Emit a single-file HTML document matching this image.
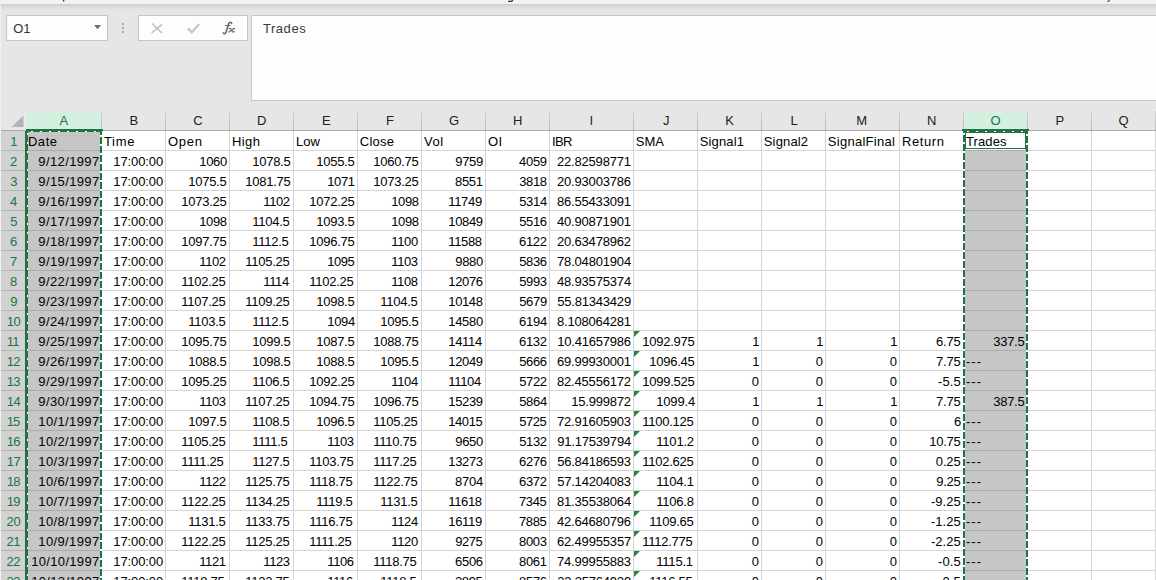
<!DOCTYPE html>
<html><head><meta charset="utf-8"><style>
*{margin:0;padding:0;box-sizing:border-box}
html,body{width:1156px;height:580px;overflow:hidden;background:#fff;font-family:"Liberation Sans",sans-serif}
.a{position:absolute}
.t{position:absolute;white-space:nowrap;font-size:13px;line-height:20px;height:20px;color:#000}
</style></head><body>

<div class="a" style="left:0;top:0;width:1156px;height:4px;background:#f3f2f1"></div>
<div class="a" style="left:0;top:4px;width:1156px;height:107px;background:linear-gradient(#cfcdcb 0px,#d8d8d7 2px,#e0e0e0 4px,#e6e6e6 7px)"></div>
<div class="a" style="left:0;top:4px;width:1px;height:576px;background:#f0f0f0"></div>
<div class="a" style="left:6px;top:15px;width:102px;height:26px;background:#fdfdfd;border:1px solid #c6c6c6"></div>
<div class="t" style="left:13.20px;top:19px;letter-spacing:0.034px;color:#333">O1</div>
<svg class="a" style="left:93px;top:24px" width="10" height="7"><path d="M1 1H8.1L4.55 5.2Z" fill="#707070"/></svg>
<div class="a" style="left:122px;top:23px;width:2px;height:2px;background:#a6a6a6"></div>
<div class="a" style="left:122px;top:27px;width:2px;height:2px;background:#a6a6a6"></div>
<div class="a" style="left:122px;top:31px;width:2px;height:2px;background:#a6a6a6"></div>
<div class="a" style="left:138px;top:15px;width:110px;height:26px;background:#fdfdfd;border:1px solid #c6c6c6"></div>
<svg class="a" style="left:150px;top:22px" width="14" height="13"><path d="M2 1.5L12 11M12 2.3L1.6 11" stroke="#c0c0c0" stroke-width="1.6" fill="none"/></svg>
<svg class="a" style="left:186px;top:22px" width="15" height="13"><path d="M1.8 6.4L5.8 10.4L13.2 2" stroke="#c8c8c8" stroke-width="2.3" fill="none"/></svg>
<svg class="a" style="left:218px;top:18px" width="22" height="18"><g transform="translate(-218,-18)" fill="none" stroke="#6b6b6b" stroke-linecap="round"><path d="M231.6 23.4C231.4 21.9 229.4 21.7 228.7 23.6L226.1 32.1C225.6 33.8 224 34.2 223.3 32.9" stroke-width="1.65"/><path d="M225.4 25.5H229.9" stroke-width="1.1"/><path d="M229.3 28.6Q230.6 27.9 231.3 29.6L232.3 31.4Q232.9 32.4 234.3 31.7" stroke-width="1.2"/><path d="M234.6 28.4Q233.4 28.4 231.6 30.2L228.8 32.1" stroke-width="1.2"/></g></svg>
<div class="a" style="left:251px;top:15px;width:920px;height:86px;background:#fdfdfd;border:1px solid #c6c6c6"></div>
<div class="t" style="left:262.88px;top:19px;letter-spacing:0.577px;color:#3a3a3a">Trades</div>
<div class="a" style="left:1px;top:111px;width:1155px;height:19px;background:#e6e6e6"></div>
<div class="a" style="left:1px;top:130px;width:1155px;height:1px;background:#ababab"></div>
<svg class="a" style="left:11px;top:115px" width="13" height="12"><path d="M12.5 0.5V12H0.5Z" fill="#b4b4b4"/></svg>
<div class="a" style="left:25px;top:111px;width:1px;height:19px;background:#f0f0f0"></div>
<div class="a" style="left:1px;top:131px;width:24px;height:449px;background:#d2d2d2"></div>
<div class="a" style="left:26px;top:111px;width:75px;height:18px;background:#d3f0e0"></div>
<div class="a" style="left:26px;top:131px;width:75px;height:449px;background:#c6c6c6"></div>
<div class="a" style="left:964px;top:111px;width:63px;height:18px;background:#d3f0e0"></div>
<div class="a" style="left:964px;top:131px;width:63px;height:449px;background:#c6c6c6"></div>
<div class="a" style="left:101px;top:111px;width:1px;height:19px;background:linear-gradient(#d4d4d4,#b8b8b8)"></div>
<div class="a" style="left:165px;top:111px;width:1px;height:19px;background:linear-gradient(#d4d4d4,#b8b8b8)"></div>
<div class="a" style="left:229px;top:111px;width:1px;height:19px;background:linear-gradient(#d4d4d4,#b8b8b8)"></div>
<div class="a" style="left:293px;top:111px;width:1px;height:19px;background:linear-gradient(#d4d4d4,#b8b8b8)"></div>
<div class="a" style="left:357px;top:111px;width:1px;height:19px;background:linear-gradient(#d4d4d4,#b8b8b8)"></div>
<div class="a" style="left:421px;top:111px;width:1px;height:19px;background:linear-gradient(#d4d4d4,#b8b8b8)"></div>
<div class="a" style="left:485px;top:111px;width:1px;height:19px;background:linear-gradient(#d4d4d4,#b8b8b8)"></div>
<div class="a" style="left:549px;top:111px;width:1px;height:19px;background:linear-gradient(#d4d4d4,#b8b8b8)"></div>
<div class="a" style="left:633px;top:111px;width:1px;height:19px;background:linear-gradient(#d4d4d4,#b8b8b8)"></div>
<div class="a" style="left:697px;top:111px;width:1px;height:19px;background:linear-gradient(#d4d4d4,#b8b8b8)"></div>
<div class="a" style="left:761px;top:111px;width:1px;height:19px;background:linear-gradient(#d4d4d4,#b8b8b8)"></div>
<div class="a" style="left:825px;top:111px;width:1px;height:19px;background:linear-gradient(#d4d4d4,#b8b8b8)"></div>
<div class="a" style="left:899px;top:111px;width:1px;height:19px;background:linear-gradient(#d4d4d4,#b8b8b8)"></div>
<div class="a" style="left:963px;top:111px;width:1px;height:19px;background:linear-gradient(#d4d4d4,#b8b8b8)"></div>
<div class="a" style="left:1027px;top:111px;width:1px;height:19px;background:linear-gradient(#d4d4d4,#b8b8b8)"></div>
<div class="a" style="left:1091px;top:111px;width:1px;height:19px;background:linear-gradient(#d4d4d4,#b8b8b8)"></div>
<div class="a" style="left:1155px;top:111px;width:1px;height:19px;background:linear-gradient(#d4d4d4,#b8b8b8)"></div>
<div class="a" style="left:26px;top:150px;width:1130px;height:1px;background:#d4d4d4"></div>
<div class="a" style="left:26px;top:150px;width:75px;height:1px;background:#ababab"></div>
<div class="a" style="left:964px;top:150px;width:63px;height:1px;background:#ababab"></div>
<div class="a" style="left:1px;top:150px;width:24px;height:1px;background:#b4b4b4"></div>
<div class="a" style="left:26px;top:170px;width:1130px;height:1px;background:#d4d4d4"></div>
<div class="a" style="left:26px;top:170px;width:75px;height:1px;background:#ababab"></div>
<div class="a" style="left:964px;top:170px;width:63px;height:1px;background:#ababab"></div>
<div class="a" style="left:1px;top:170px;width:24px;height:1px;background:#b4b4b4"></div>
<div class="a" style="left:26px;top:190px;width:1130px;height:1px;background:#d4d4d4"></div>
<div class="a" style="left:26px;top:190px;width:75px;height:1px;background:#ababab"></div>
<div class="a" style="left:964px;top:190px;width:63px;height:1px;background:#ababab"></div>
<div class="a" style="left:1px;top:190px;width:24px;height:1px;background:#b4b4b4"></div>
<div class="a" style="left:26px;top:210px;width:1130px;height:1px;background:#d4d4d4"></div>
<div class="a" style="left:26px;top:210px;width:75px;height:1px;background:#ababab"></div>
<div class="a" style="left:964px;top:210px;width:63px;height:1px;background:#ababab"></div>
<div class="a" style="left:1px;top:210px;width:24px;height:1px;background:#b4b4b4"></div>
<div class="a" style="left:26px;top:230px;width:1130px;height:1px;background:#d4d4d4"></div>
<div class="a" style="left:26px;top:230px;width:75px;height:1px;background:#ababab"></div>
<div class="a" style="left:964px;top:230px;width:63px;height:1px;background:#ababab"></div>
<div class="a" style="left:1px;top:230px;width:24px;height:1px;background:#b4b4b4"></div>
<div class="a" style="left:26px;top:250px;width:1130px;height:1px;background:#d4d4d4"></div>
<div class="a" style="left:26px;top:250px;width:75px;height:1px;background:#ababab"></div>
<div class="a" style="left:964px;top:250px;width:63px;height:1px;background:#ababab"></div>
<div class="a" style="left:1px;top:250px;width:24px;height:1px;background:#b4b4b4"></div>
<div class="a" style="left:26px;top:270px;width:1130px;height:1px;background:#d4d4d4"></div>
<div class="a" style="left:26px;top:270px;width:75px;height:1px;background:#ababab"></div>
<div class="a" style="left:964px;top:270px;width:63px;height:1px;background:#ababab"></div>
<div class="a" style="left:1px;top:270px;width:24px;height:1px;background:#b4b4b4"></div>
<div class="a" style="left:26px;top:290px;width:1130px;height:1px;background:#d4d4d4"></div>
<div class="a" style="left:26px;top:290px;width:75px;height:1px;background:#ababab"></div>
<div class="a" style="left:964px;top:290px;width:63px;height:1px;background:#ababab"></div>
<div class="a" style="left:1px;top:290px;width:24px;height:1px;background:#b4b4b4"></div>
<div class="a" style="left:26px;top:310px;width:1130px;height:1px;background:#d4d4d4"></div>
<div class="a" style="left:26px;top:310px;width:75px;height:1px;background:#ababab"></div>
<div class="a" style="left:964px;top:310px;width:63px;height:1px;background:#ababab"></div>
<div class="a" style="left:1px;top:310px;width:24px;height:1px;background:#b4b4b4"></div>
<div class="a" style="left:26px;top:330px;width:1130px;height:1px;background:#d4d4d4"></div>
<div class="a" style="left:26px;top:330px;width:75px;height:1px;background:#ababab"></div>
<div class="a" style="left:964px;top:330px;width:63px;height:1px;background:#ababab"></div>
<div class="a" style="left:1px;top:330px;width:24px;height:1px;background:#b4b4b4"></div>
<div class="a" style="left:26px;top:350px;width:1130px;height:1px;background:#d4d4d4"></div>
<div class="a" style="left:26px;top:350px;width:75px;height:1px;background:#ababab"></div>
<div class="a" style="left:964px;top:350px;width:63px;height:1px;background:#ababab"></div>
<div class="a" style="left:1px;top:350px;width:24px;height:1px;background:#b4b4b4"></div>
<div class="a" style="left:26px;top:370px;width:1130px;height:1px;background:#d4d4d4"></div>
<div class="a" style="left:26px;top:370px;width:75px;height:1px;background:#ababab"></div>
<div class="a" style="left:964px;top:370px;width:63px;height:1px;background:#ababab"></div>
<div class="a" style="left:1px;top:370px;width:24px;height:1px;background:#b4b4b4"></div>
<div class="a" style="left:26px;top:390px;width:1130px;height:1px;background:#d4d4d4"></div>
<div class="a" style="left:26px;top:390px;width:75px;height:1px;background:#ababab"></div>
<div class="a" style="left:964px;top:390px;width:63px;height:1px;background:#ababab"></div>
<div class="a" style="left:1px;top:390px;width:24px;height:1px;background:#b4b4b4"></div>
<div class="a" style="left:26px;top:410px;width:1130px;height:1px;background:#d4d4d4"></div>
<div class="a" style="left:26px;top:410px;width:75px;height:1px;background:#ababab"></div>
<div class="a" style="left:964px;top:410px;width:63px;height:1px;background:#ababab"></div>
<div class="a" style="left:1px;top:410px;width:24px;height:1px;background:#b4b4b4"></div>
<div class="a" style="left:26px;top:430px;width:1130px;height:1px;background:#d4d4d4"></div>
<div class="a" style="left:26px;top:430px;width:75px;height:1px;background:#ababab"></div>
<div class="a" style="left:964px;top:430px;width:63px;height:1px;background:#ababab"></div>
<div class="a" style="left:1px;top:430px;width:24px;height:1px;background:#b4b4b4"></div>
<div class="a" style="left:26px;top:450px;width:1130px;height:1px;background:#d4d4d4"></div>
<div class="a" style="left:26px;top:450px;width:75px;height:1px;background:#ababab"></div>
<div class="a" style="left:964px;top:450px;width:63px;height:1px;background:#ababab"></div>
<div class="a" style="left:1px;top:450px;width:24px;height:1px;background:#b4b4b4"></div>
<div class="a" style="left:26px;top:470px;width:1130px;height:1px;background:#d4d4d4"></div>
<div class="a" style="left:26px;top:470px;width:75px;height:1px;background:#ababab"></div>
<div class="a" style="left:964px;top:470px;width:63px;height:1px;background:#ababab"></div>
<div class="a" style="left:1px;top:470px;width:24px;height:1px;background:#b4b4b4"></div>
<div class="a" style="left:26px;top:490px;width:1130px;height:1px;background:#d4d4d4"></div>
<div class="a" style="left:26px;top:490px;width:75px;height:1px;background:#ababab"></div>
<div class="a" style="left:964px;top:490px;width:63px;height:1px;background:#ababab"></div>
<div class="a" style="left:1px;top:490px;width:24px;height:1px;background:#b4b4b4"></div>
<div class="a" style="left:26px;top:510px;width:1130px;height:1px;background:#d4d4d4"></div>
<div class="a" style="left:26px;top:510px;width:75px;height:1px;background:#ababab"></div>
<div class="a" style="left:964px;top:510px;width:63px;height:1px;background:#ababab"></div>
<div class="a" style="left:1px;top:510px;width:24px;height:1px;background:#b4b4b4"></div>
<div class="a" style="left:26px;top:530px;width:1130px;height:1px;background:#d4d4d4"></div>
<div class="a" style="left:26px;top:530px;width:75px;height:1px;background:#ababab"></div>
<div class="a" style="left:964px;top:530px;width:63px;height:1px;background:#ababab"></div>
<div class="a" style="left:1px;top:530px;width:24px;height:1px;background:#b4b4b4"></div>
<div class="a" style="left:26px;top:550px;width:1130px;height:1px;background:#d4d4d4"></div>
<div class="a" style="left:26px;top:550px;width:75px;height:1px;background:#ababab"></div>
<div class="a" style="left:964px;top:550px;width:63px;height:1px;background:#ababab"></div>
<div class="a" style="left:1px;top:550px;width:24px;height:1px;background:#b4b4b4"></div>
<div class="a" style="left:26px;top:570px;width:1130px;height:1px;background:#d4d4d4"></div>
<div class="a" style="left:26px;top:570px;width:75px;height:1px;background:#ababab"></div>
<div class="a" style="left:964px;top:570px;width:63px;height:1px;background:#ababab"></div>
<div class="a" style="left:1px;top:570px;width:24px;height:1px;background:#b4b4b4"></div>
<div class="a" style="left:101px;top:131px;width:1px;height:449px;background:#d4d4d4"></div>
<div class="a" style="left:165px;top:131px;width:1px;height:449px;background:#d4d4d4"></div>
<div class="a" style="left:229px;top:131px;width:1px;height:449px;background:#d4d4d4"></div>
<div class="a" style="left:293px;top:131px;width:1px;height:449px;background:#d4d4d4"></div>
<div class="a" style="left:357px;top:131px;width:1px;height:449px;background:#d4d4d4"></div>
<div class="a" style="left:421px;top:131px;width:1px;height:449px;background:#d4d4d4"></div>
<div class="a" style="left:485px;top:131px;width:1px;height:449px;background:#d4d4d4"></div>
<div class="a" style="left:549px;top:131px;width:1px;height:449px;background:#d4d4d4"></div>
<div class="a" style="left:633px;top:131px;width:1px;height:449px;background:#d4d4d4"></div>
<div class="a" style="left:697px;top:131px;width:1px;height:449px;background:#d4d4d4"></div>
<div class="a" style="left:761px;top:131px;width:1px;height:449px;background:#d4d4d4"></div>
<div class="a" style="left:825px;top:131px;width:1px;height:449px;background:#d4d4d4"></div>
<div class="a" style="left:899px;top:131px;width:1px;height:449px;background:#d4d4d4"></div>
<div class="a" style="left:963px;top:131px;width:1px;height:449px;background:#d4d4d4"></div>
<div class="a" style="left:1027px;top:131px;width:1px;height:449px;background:#d4d4d4"></div>
<div class="a" style="left:1091px;top:131px;width:1px;height:449px;background:#d4d4d4"></div>
<div class="a" style="left:1155px;top:131px;width:1px;height:449px;background:#d4d4d4"></div>
<div class="t" style="left:59.53px;top:111px;letter-spacing:0.000px;color:#217346">A</div>
<div class="t" style="left:129.46px;top:111px;letter-spacing:0.000px;color:#222">B</div>
<div class="t" style="left:193.32px;top:111px;letter-spacing:0.000px;color:#222">C</div>
<div class="t" style="left:256.93px;top:111px;letter-spacing:0.000px;color:#222">D</div>
<div class="t" style="left:321.97px;top:111px;letter-spacing:0.000px;color:#222">E</div>
<div class="t" style="left:385.92px;top:111px;letter-spacing:0.000px;color:#222">F</div>
<div class="t" style="left:448.90px;top:111px;letter-spacing:0.000px;color:#222">G</div>
<div class="t" style="left:512.94px;top:111px;letter-spacing:0.000px;color:#222">H</div>
<div class="t" style="left:589.50px;top:111px;letter-spacing:0.000px;color:#222">I</div>
<div class="t" style="left:663.04px;top:111px;letter-spacing:0.000px;color:#222">J</div>
<div class="t" style="left:725.32px;top:111px;letter-spacing:0.000px;color:#222">K</div>
<div class="t" style="left:790.42px;top:111px;letter-spacing:0.000px;color:#222">L</div>
<div class="t" style="left:856.13px;top:111px;letter-spacing:0.000px;color:#222">M</div>
<div class="t" style="left:926.99px;top:111px;letter-spacing:0.000px;color:#222">N</div>
<div class="t" style="left:990.40px;top:111px;letter-spacing:0.000px;color:#217346">O</div>
<div class="t" style="left:1055.49px;top:111px;letter-spacing:0.000px;color:#222">P</div>
<div class="t" style="left:1118.48px;top:111px;letter-spacing:0.000px;color:#222">Q</div>
<div class="t" style="left:10.28px;top:132px;letter-spacing:0.000px;color:#217346">1</div>
<div class="t" style="left:10.01px;top:152px;letter-spacing:0.000px;color:#217346">2</div>
<div class="t" style="left:10.19px;top:172px;letter-spacing:0.000px;color:#217346">3</div>
<div class="t" style="left:9.95px;top:192px;letter-spacing:0.000px;color:#217346">4</div>
<div class="t" style="left:10.15px;top:212px;letter-spacing:0.000px;color:#217346">5</div>
<div class="t" style="left:10.00px;top:232px;letter-spacing:0.000px;color:#217346">6</div>
<div class="t" style="left:10.04px;top:252px;letter-spacing:0.000px;color:#217346">7</div>
<div class="t" style="left:10.02px;top:272px;letter-spacing:0.000px;color:#217346">8</div>
<div class="t" style="left:10.33px;top:292px;letter-spacing:0.000px;color:#217346">9</div>
<div class="t" style="left:6.78px;top:312px;letter-spacing:-0.609px;color:#217346">10</div>
<div class="t" style="left:6.78px;top:332px;letter-spacing:-0.761px;color:#217346">11</div>
<div class="t" style="left:6.78px;top:352px;letter-spacing:-0.707px;color:#217346">12</div>
<div class="t" style="left:6.78px;top:372px;letter-spacing:-0.725px;color:#217346">13</div>
<div class="t" style="left:6.78px;top:392px;letter-spacing:-0.600px;color:#217346">14</div>
<div class="t" style="left:6.78px;top:412px;letter-spacing:-1.058px;color:#217346">15</div>
<div class="t" style="left:6.78px;top:432px;letter-spacing:-0.675px;color:#217346">16</div>
<div class="t" style="left:6.78px;top:452px;letter-spacing:-0.556px;color:#217346">17</div>
<div class="t" style="left:6.78px;top:472px;letter-spacing:-0.760px;color:#217346">18</div>
<div class="t" style="left:6.78px;top:492px;letter-spacing:-0.623px;color:#217346">19</div>
<div class="t" style="left:6.51px;top:512px;letter-spacing:-0.337px;color:#217346">20</div>
<div class="t" style="left:6.51px;top:532px;letter-spacing:-0.489px;color:#217346">21</div>
<div class="t" style="left:6.51px;top:552px;letter-spacing:-0.434px;color:#217346">22</div>
<div class="t" style="left:6.51px;top:572px;letter-spacing:-0.452px;color:#217346">23</div>
<div class="t" style="left:27.93px;top:132px;letter-spacing:0.553px;color:#000">Date</div>
<div class="t" style="left:103.88px;top:132px;letter-spacing:0.760px;color:#000">Time</div>
<div class="t" style="left:167.90px;top:132px;letter-spacing:0.749px;color:#000">Open</div>
<div class="t" style="left:231.94px;top:132px;letter-spacing:0.425px;color:#000">High</div>
<div class="t" style="left:295.92px;top:132px;letter-spacing:0.024px;color:#000">Low</div>
<div class="t" style="left:359.82px;top:132px;letter-spacing:0.248px;color:#000">Close</div>
<div class="t" style="left:423.99px;top:132px;letter-spacing:0.521px;color:#000">Vol</div>
<div class="t" style="left:487.90px;top:132px;letter-spacing:0.380px;color:#000">OI</div>
<div class="t" style="left:552.00px;top:132px;letter-spacing:-0.640px;color:#000">IBR</div>
<div class="t" style="left:635.80px;top:132px;letter-spacing:0.000px;color:#000">SMA</div>
<div class="t" style="left:699.80px;top:132px;letter-spacing:0.134px;color:#000">Signal1</div>
<div class="t" style="left:763.80px;top:132px;letter-spacing:0.143px;color:#000">Signal2</div>
<div class="t" style="left:827.80px;top:132px;letter-spacing:0.270px;color:#000">SignalFinal</div>
<div class="t" style="left:901.99px;top:132px;letter-spacing:0.589px;color:#000">Return</div>
<div class="t" style="left:38.33px;top:152px;letter-spacing:0.377px;color:#000">9/12/1997</div>
<div class="t" style="left:113.28px;top:152px;letter-spacing:-0.108px;color:#000">17:00:00</div>
<div class="t" style="left:199.28px;top:152px;letter-spacing:-0.356px;color:#000">1060</div>
<div class="t" style="left:252.28px;top:152px;letter-spacing:-0.272px;color:#000">1078.5</div>
<div class="t" style="left:316.28px;top:152px;letter-spacing:-0.272px;color:#000">1055.5</div>
<div class="t" style="left:373.28px;top:152px;letter-spacing:-0.265px;color:#000">1060.75</div>
<div class="t" style="left:455.33px;top:152px;letter-spacing:-0.378px;color:#000">9759</div>
<div class="t" style="left:518.95px;top:152px;letter-spacing:-0.253px;color:#000">4059</div>
<div class="t" style="left:557.01px;top:152px;letter-spacing:-0.194px;color:#000">22.82598771</div>
<div class="t" style="left:38.33px;top:172px;letter-spacing:0.377px;color:#000">9/15/1997</div>
<div class="t" style="left:113.28px;top:172px;letter-spacing:-0.108px;color:#000">17:00:00</div>
<div class="t" style="left:188.28px;top:172px;letter-spacing:-0.272px;color:#000">1075.5</div>
<div class="t" style="left:245.28px;top:172px;letter-spacing:-0.265px;color:#000">1081.75</div>
<div class="t" style="left:327.28px;top:172px;letter-spacing:-0.407px;color:#000">1071</div>
<div class="t" style="left:373.28px;top:172px;letter-spacing:-0.265px;color:#000">1073.25</div>
<div class="t" style="left:455.02px;top:172px;letter-spacing:-0.322px;color:#000">8551</div>
<div class="t" style="left:519.19px;top:172px;letter-spacing:-0.376px;color:#000">3818</div>
<div class="t" style="left:557.01px;top:172px;letter-spacing:-0.185px;color:#000">20.93003786</div>
<div class="t" style="left:38.33px;top:192px;letter-spacing:0.377px;color:#000">9/16/1997</div>
<div class="t" style="left:113.28px;top:192px;letter-spacing:-0.108px;color:#000">17:00:00</div>
<div class="t" style="left:181.28px;top:192px;letter-spacing:-0.265px;color:#000">1073.25</div>
<div class="t" style="left:263.28px;top:192px;letter-spacing:-0.389px;color:#000">1102</div>
<div class="t" style="left:309.28px;top:192px;letter-spacing:-0.265px;color:#000">1072.25</div>
<div class="t" style="left:391.28px;top:192px;letter-spacing:-0.407px;color:#000">1098</div>
<div class="t" style="left:448.28px;top:192px;letter-spacing:-0.328px;color:#000">11749</div>
<div class="t" style="left:519.15px;top:192px;letter-spacing:-0.309px;color:#000">5314</div>
<div class="t" style="left:557.02px;top:192px;letter-spacing:-0.196px;color:#000">86.55433091</div>
<div class="t" style="left:38.33px;top:212px;letter-spacing:0.377px;color:#000">9/17/1997</div>
<div class="t" style="left:113.28px;top:212px;letter-spacing:-0.108px;color:#000">17:00:00</div>
<div class="t" style="left:199.28px;top:212px;letter-spacing:-0.407px;color:#000">1098</div>
<div class="t" style="left:252.28px;top:212px;letter-spacing:-0.272px;color:#000">1104.5</div>
<div class="t" style="left:316.28px;top:212px;letter-spacing:-0.272px;color:#000">1093.5</div>
<div class="t" style="left:391.28px;top:212px;letter-spacing:-0.407px;color:#000">1098</div>
<div class="t" style="left:448.28px;top:212px;letter-spacing:-0.328px;color:#000">10849</div>
<div class="t" style="left:519.15px;top:212px;letter-spacing:-0.334px;color:#000">5516</div>
<div class="t" style="left:556.95px;top:212px;letter-spacing:-0.189px;color:#000">40.90871901</div>
<div class="t" style="left:38.33px;top:232px;letter-spacing:0.377px;color:#000">9/18/1997</div>
<div class="t" style="left:113.28px;top:232px;letter-spacing:-0.108px;color:#000">17:00:00</div>
<div class="t" style="left:181.28px;top:232px;letter-spacing:-0.265px;color:#000">1097.75</div>
<div class="t" style="left:252.28px;top:232px;letter-spacing:-0.272px;color:#000">1112.5</div>
<div class="t" style="left:309.28px;top:232px;letter-spacing:-0.265px;color:#000">1096.75</div>
<div class="t" style="left:391.28px;top:232px;letter-spacing:-0.356px;color:#000">1100</div>
<div class="t" style="left:448.28px;top:232px;letter-spacing:-0.362px;color:#000">11588</div>
<div class="t" style="left:519.00px;top:232px;letter-spacing:-0.296px;color:#000">6122</div>
<div class="t" style="left:557.01px;top:232px;letter-spacing:-0.189px;color:#000">20.63478962</div>
<div class="t" style="left:38.33px;top:252px;letter-spacing:0.377px;color:#000">9/19/1997</div>
<div class="t" style="left:113.28px;top:252px;letter-spacing:-0.108px;color:#000">17:00:00</div>
<div class="t" style="left:199.28px;top:252px;letter-spacing:-0.389px;color:#000">1102</div>
<div class="t" style="left:245.28px;top:252px;letter-spacing:-0.265px;color:#000">1105.25</div>
<div class="t" style="left:327.28px;top:252px;letter-spacing:-0.506px;color:#000">1095</div>
<div class="t" style="left:391.28px;top:252px;letter-spacing:-0.395px;color:#000">1103</div>
<div class="t" style="left:455.33px;top:252px;letter-spacing:-0.373px;color:#000">9880</div>
<div class="t" style="left:519.15px;top:252px;letter-spacing:-0.334px;color:#000">5836</div>
<div class="t" style="left:557.04px;top:252px;letter-spacing:-0.181px;color:#000">78.04801904</div>
<div class="t" style="left:38.33px;top:272px;letter-spacing:0.377px;color:#000">9/22/1997</div>
<div class="t" style="left:113.28px;top:272px;letter-spacing:-0.108px;color:#000">17:00:00</div>
<div class="t" style="left:181.28px;top:272px;letter-spacing:-0.265px;color:#000">1102.25</div>
<div class="t" style="left:263.28px;top:272px;letter-spacing:-0.353px;color:#000">1114</div>
<div class="t" style="left:309.28px;top:272px;letter-spacing:-0.265px;color:#000">1102.25</div>
<div class="t" style="left:391.28px;top:272px;letter-spacing:-0.407px;color:#000">1108</div>
<div class="t" style="left:448.28px;top:272px;letter-spacing:-0.341px;color:#000">12076</div>
<div class="t" style="left:519.15px;top:272px;letter-spacing:-0.351px;color:#000">5993</div>
<div class="t" style="left:556.95px;top:272px;letter-spacing:-0.173px;color:#000">48.93575374</div>
<div class="t" style="left:38.33px;top:292px;letter-spacing:0.377px;color:#000">9/23/1997</div>
<div class="t" style="left:113.28px;top:292px;letter-spacing:-0.108px;color:#000">17:00:00</div>
<div class="t" style="left:181.28px;top:292px;letter-spacing:-0.265px;color:#000">1107.25</div>
<div class="t" style="left:245.28px;top:292px;letter-spacing:-0.265px;color:#000">1109.25</div>
<div class="t" style="left:316.28px;top:292px;letter-spacing:-0.272px;color:#000">1098.5</div>
<div class="t" style="left:380.28px;top:292px;letter-spacing:-0.272px;color:#000">1104.5</div>
<div class="t" style="left:448.28px;top:292px;letter-spacing:-0.362px;color:#000">10148</div>
<div class="t" style="left:519.15px;top:292px;letter-spacing:-0.317px;color:#000">5679</div>
<div class="t" style="left:557.15px;top:292px;letter-spacing:-0.194px;color:#000">55.81343429</div>
<div class="t" style="left:38.33px;top:312px;letter-spacing:0.377px;color:#000">9/24/1997</div>
<div class="t" style="left:113.28px;top:312px;letter-spacing:-0.108px;color:#000">17:00:00</div>
<div class="t" style="left:188.28px;top:312px;letter-spacing:-0.272px;color:#000">1103.5</div>
<div class="t" style="left:252.28px;top:312px;letter-spacing:-0.272px;color:#000">1112.5</div>
<div class="t" style="left:327.28px;top:312px;letter-spacing:-0.353px;color:#000">1094</div>
<div class="t" style="left:380.28px;top:312px;letter-spacing:-0.272px;color:#000">1095.5</div>
<div class="t" style="left:448.28px;top:312px;letter-spacing:-0.325px;color:#000">14580</div>
<div class="t" style="left:519.00px;top:312px;letter-spacing:-0.260px;color:#000">6194</div>
<div class="t" style="left:557.02px;top:312px;letter-spacing:-0.196px;color:#000">8.108064281</div>
<div class="t" style="left:38.33px;top:332px;letter-spacing:0.377px;color:#000">9/25/1997</div>
<div class="t" style="left:113.28px;top:332px;letter-spacing:-0.108px;color:#000">17:00:00</div>
<div class="t" style="left:181.28px;top:332px;letter-spacing:-0.265px;color:#000">1095.75</div>
<div class="t" style="left:252.28px;top:332px;letter-spacing:-0.272px;color:#000">1099.5</div>
<div class="t" style="left:316.28px;top:332px;letter-spacing:-0.272px;color:#000">1087.5</div>
<div class="t" style="left:373.28px;top:332px;letter-spacing:-0.265px;color:#000">1088.75</div>
<div class="t" style="left:448.28px;top:332px;letter-spacing:-0.322px;color:#000">14114</div>
<div class="t" style="left:519.00px;top:332px;letter-spacing:-0.296px;color:#000">6132</div>
<div class="t" style="left:557.28px;top:332px;letter-spacing:-0.213px;color:#000">10.41657986</div>
<div class="t" style="left:642.28px;top:332px;letter-spacing:-0.260px;color:#000">1092.975</div>
<svg class="a" style="left:634px;top:331px" width="6" height="6"><path d="M0 0H6L0 6Z" fill="#1e8a3e"/></svg>
<div class="t" style="left:752.28px;top:332px;letter-spacing:0.000px;color:#000">1</div>
<div class="t" style="left:816.28px;top:332px;letter-spacing:0.000px;color:#000">1</div>
<div class="t" style="left:890.28px;top:332px;letter-spacing:0.000px;color:#000">1</div>
<div class="t" style="left:936.00px;top:332px;letter-spacing:-0.207px;color:#000">6.75</div>
<div class="t" style="left:993.19px;top:332px;letter-spacing:-0.259px;color:#000">337.5</div>
<div class="t" style="left:38.33px;top:352px;letter-spacing:0.377px;color:#000">9/26/1997</div>
<div class="t" style="left:113.28px;top:352px;letter-spacing:-0.108px;color:#000">17:00:00</div>
<div class="t" style="left:188.28px;top:352px;letter-spacing:-0.272px;color:#000">1088.5</div>
<div class="t" style="left:252.28px;top:352px;letter-spacing:-0.272px;color:#000">1098.5</div>
<div class="t" style="left:316.28px;top:352px;letter-spacing:-0.272px;color:#000">1088.5</div>
<div class="t" style="left:380.28px;top:352px;letter-spacing:-0.272px;color:#000">1095.5</div>
<div class="t" style="left:448.28px;top:352px;letter-spacing:-0.328px;color:#000">12049</div>
<div class="t" style="left:519.15px;top:352px;letter-spacing:-0.334px;color:#000">5666</div>
<div class="t" style="left:557.00px;top:352px;letter-spacing:-0.193px;color:#000">69.99930001</div>
<div class="t" style="left:649.28px;top:352px;letter-spacing:-0.265px;color:#000">1096.45</div>
<svg class="a" style="left:634px;top:351px" width="6" height="6"><path d="M0 0H6L0 6Z" fill="#1e8a3e"/></svg>
<div class="t" style="left:752.28px;top:352px;letter-spacing:0.000px;color:#000">1</div>
<div class="t" style="left:815.87px;top:352px;letter-spacing:0.000px;color:#000">0</div>
<div class="t" style="left:889.87px;top:352px;letter-spacing:0.000px;color:#000">0</div>
<div class="t" style="left:936.04px;top:352px;letter-spacing:-0.219px;color:#000">7.75</div>
<div class="t" style="left:965.96px;top:352px;letter-spacing:1.050px;color:#000">---</div>
<div class="t" style="left:38.33px;top:372px;letter-spacing:0.377px;color:#000">9/29/1997</div>
<div class="t" style="left:113.28px;top:372px;letter-spacing:-0.108px;color:#000">17:00:00</div>
<div class="t" style="left:181.28px;top:372px;letter-spacing:-0.265px;color:#000">1095.25</div>
<div class="t" style="left:252.28px;top:372px;letter-spacing:-0.272px;color:#000">1106.5</div>
<div class="t" style="left:309.28px;top:372px;letter-spacing:-0.265px;color:#000">1092.25</div>
<div class="t" style="left:391.28px;top:372px;letter-spacing:-0.353px;color:#000">1104</div>
<div class="t" style="left:448.28px;top:372px;letter-spacing:-0.322px;color:#000">11104</div>
<div class="t" style="left:519.15px;top:372px;letter-spacing:-0.345px;color:#000">5722</div>
<div class="t" style="left:557.02px;top:372px;letter-spacing:-0.190px;color:#000">82.45556172</div>
<div class="t" style="left:642.28px;top:372px;letter-spacing:-0.260px;color:#000">1099.525</div>
<svg class="a" style="left:634px;top:371px" width="6" height="6"><path d="M0 0H6L0 6Z" fill="#1e8a3e"/></svg>
<div class="t" style="left:751.87px;top:372px;letter-spacing:0.000px;color:#000">0</div>
<div class="t" style="left:815.87px;top:372px;letter-spacing:0.000px;color:#000">0</div>
<div class="t" style="left:889.87px;top:372px;letter-spacing:0.000px;color:#000">0</div>
<div class="t" style="left:937.96px;top:372px;letter-spacing:0.106px;color:#000">-5.5</div>
<div class="t" style="left:965.96px;top:372px;letter-spacing:1.050px;color:#000">---</div>
<div class="t" style="left:38.33px;top:392px;letter-spacing:0.377px;color:#000">9/30/1997</div>
<div class="t" style="left:113.28px;top:392px;letter-spacing:-0.108px;color:#000">17:00:00</div>
<div class="t" style="left:199.28px;top:392px;letter-spacing:-0.395px;color:#000">1103</div>
<div class="t" style="left:245.28px;top:392px;letter-spacing:-0.265px;color:#000">1107.25</div>
<div class="t" style="left:309.28px;top:392px;letter-spacing:-0.265px;color:#000">1094.75</div>
<div class="t" style="left:373.28px;top:392px;letter-spacing:-0.265px;color:#000">1096.75</div>
<div class="t" style="left:448.28px;top:392px;letter-spacing:-0.328px;color:#000">15239</div>
<div class="t" style="left:519.15px;top:392px;letter-spacing:-0.309px;color:#000">5864</div>
<div class="t" style="left:571.28px;top:392px;letter-spacing:-0.212px;color:#000">15.999872</div>
<div class="t" style="left:656.28px;top:392px;letter-spacing:-0.180px;color:#000">1099.4</div>
<svg class="a" style="left:634px;top:391px" width="6" height="6"><path d="M0 0H6L0 6Z" fill="#1e8a3e"/></svg>
<div class="t" style="left:752.28px;top:392px;letter-spacing:0.000px;color:#000">1</div>
<div class="t" style="left:816.28px;top:392px;letter-spacing:0.000px;color:#000">1</div>
<div class="t" style="left:890.28px;top:392px;letter-spacing:0.000px;color:#000">1</div>
<div class="t" style="left:936.04px;top:392px;letter-spacing:-0.219px;color:#000">7.75</div>
<div class="t" style="left:993.19px;top:392px;letter-spacing:-0.259px;color:#000">387.5</div>
<div class="t" style="left:38.28px;top:412px;letter-spacing:0.384px;color:#000">10/1/1997</div>
<div class="t" style="left:113.28px;top:412px;letter-spacing:-0.108px;color:#000">17:00:00</div>
<div class="t" style="left:188.28px;top:412px;letter-spacing:-0.272px;color:#000">1097.5</div>
<div class="t" style="left:252.28px;top:412px;letter-spacing:-0.272px;color:#000">1108.5</div>
<div class="t" style="left:316.28px;top:412px;letter-spacing:-0.272px;color:#000">1096.5</div>
<div class="t" style="left:373.28px;top:412px;letter-spacing:-0.265px;color:#000">1105.25</div>
<div class="t" style="left:448.28px;top:412px;letter-spacing:-0.437px;color:#000">14015</div>
<div class="t" style="left:519.15px;top:412px;letter-spacing:-0.462px;color:#000">5725</div>
<div class="t" style="left:557.04px;top:412px;letter-spacing:-0.193px;color:#000">72.91605903</div>
<div class="t" style="left:642.28px;top:412px;letter-spacing:-0.260px;color:#000">1100.125</div>
<svg class="a" style="left:634px;top:411px" width="6" height="6"><path d="M0 0H6L0 6Z" fill="#1e8a3e"/></svg>
<div class="t" style="left:751.87px;top:412px;letter-spacing:0.000px;color:#000">0</div>
<div class="t" style="left:815.87px;top:412px;letter-spacing:0.000px;color:#000">0</div>
<div class="t" style="left:889.87px;top:412px;letter-spacing:0.000px;color:#000">0</div>
<div class="t" style="left:954.00px;top:412px;letter-spacing:0.000px;color:#000">6</div>
<div class="t" style="left:965.96px;top:412px;letter-spacing:1.050px;color:#000">---</div>
<div class="t" style="left:38.28px;top:432px;letter-spacing:0.384px;color:#000">10/2/1997</div>
<div class="t" style="left:113.28px;top:432px;letter-spacing:-0.108px;color:#000">17:00:00</div>
<div class="t" style="left:181.28px;top:432px;letter-spacing:-0.265px;color:#000">1105.25</div>
<div class="t" style="left:252.28px;top:432px;letter-spacing:-0.272px;color:#000">1111.5</div>
<div class="t" style="left:327.28px;top:432px;letter-spacing:-0.395px;color:#000">1103</div>
<div class="t" style="left:373.28px;top:432px;letter-spacing:-0.265px;color:#000">1110.75</div>
<div class="t" style="left:455.33px;top:432px;letter-spacing:-0.373px;color:#000">9650</div>
<div class="t" style="left:519.15px;top:432px;letter-spacing:-0.345px;color:#000">5132</div>
<div class="t" style="left:557.33px;top:432px;letter-spacing:-0.210px;color:#000">91.17539794</div>
<div class="t" style="left:656.28px;top:432px;letter-spacing:-0.202px;color:#000">1101.2</div>
<svg class="a" style="left:634px;top:431px" width="6" height="6"><path d="M0 0H6L0 6Z" fill="#1e8a3e"/></svg>
<div class="t" style="left:751.87px;top:432px;letter-spacing:0.000px;color:#000">0</div>
<div class="t" style="left:815.87px;top:432px;letter-spacing:0.000px;color:#000">0</div>
<div class="t" style="left:889.87px;top:432px;letter-spacing:0.000px;color:#000">0</div>
<div class="t" style="left:929.28px;top:432px;letter-spacing:-0.282px;color:#000">10.75</div>
<div class="t" style="left:965.96px;top:432px;letter-spacing:1.050px;color:#000">---</div>
<div class="t" style="left:38.28px;top:452px;letter-spacing:0.384px;color:#000">10/3/1997</div>
<div class="t" style="left:113.28px;top:452px;letter-spacing:-0.108px;color:#000">17:00:00</div>
<div class="t" style="left:181.28px;top:452px;letter-spacing:-0.265px;color:#000">1111.25</div>
<div class="t" style="left:252.28px;top:452px;letter-spacing:-0.272px;color:#000">1127.5</div>
<div class="t" style="left:309.28px;top:452px;letter-spacing:-0.265px;color:#000">1103.75</div>
<div class="t" style="left:373.28px;top:452px;letter-spacing:-0.265px;color:#000">1117.25</div>
<div class="t" style="left:448.28px;top:452px;letter-spacing:-0.354px;color:#000">13273</div>
<div class="t" style="left:519.00px;top:452px;letter-spacing:-0.285px;color:#000">6276</div>
<div class="t" style="left:557.15px;top:452px;letter-spacing:-0.204px;color:#000">56.84186593</div>
<div class="t" style="left:642.28px;top:452px;letter-spacing:-0.260px;color:#000">1102.625</div>
<svg class="a" style="left:634px;top:451px" width="6" height="6"><path d="M0 0H6L0 6Z" fill="#1e8a3e"/></svg>
<div class="t" style="left:751.87px;top:452px;letter-spacing:0.000px;color:#000">0</div>
<div class="t" style="left:815.87px;top:452px;letter-spacing:0.000px;color:#000">0</div>
<div class="t" style="left:889.87px;top:452px;letter-spacing:0.000px;color:#000">0</div>
<div class="t" style="left:935.87px;top:452px;letter-spacing:-0.165px;color:#000">0.25</div>
<div class="t" style="left:965.96px;top:452px;letter-spacing:1.050px;color:#000">---</div>
<div class="t" style="left:38.28px;top:472px;letter-spacing:0.384px;color:#000">10/6/1997</div>
<div class="t" style="left:113.28px;top:472px;letter-spacing:-0.108px;color:#000">17:00:00</div>
<div class="t" style="left:199.28px;top:472px;letter-spacing:-0.389px;color:#000">1122</div>
<div class="t" style="left:245.28px;top:472px;letter-spacing:-0.265px;color:#000">1125.75</div>
<div class="t" style="left:309.28px;top:472px;letter-spacing:-0.265px;color:#000">1118.75</div>
<div class="t" style="left:373.28px;top:472px;letter-spacing:-0.265px;color:#000">1122.75</div>
<div class="t" style="left:455.02px;top:472px;letter-spacing:-0.268px;color:#000">8704</div>
<div class="t" style="left:519.00px;top:472px;letter-spacing:-0.296px;color:#000">6372</div>
<div class="t" style="left:557.15px;top:472px;letter-spacing:-0.204px;color:#000">57.14204083</div>
<div class="t" style="left:656.28px;top:472px;letter-spacing:-0.213px;color:#000">1104.1</div>
<svg class="a" style="left:634px;top:471px" width="6" height="6"><path d="M0 0H6L0 6Z" fill="#1e8a3e"/></svg>
<div class="t" style="left:751.87px;top:472px;letter-spacing:0.000px;color:#000">0</div>
<div class="t" style="left:815.87px;top:472px;letter-spacing:0.000px;color:#000">0</div>
<div class="t" style="left:889.87px;top:472px;letter-spacing:0.000px;color:#000">0</div>
<div class="t" style="left:936.33px;top:472px;letter-spacing:-0.317px;color:#000">9.25</div>
<div class="t" style="left:965.96px;top:472px;letter-spacing:1.050px;color:#000">---</div>
<div class="t" style="left:38.28px;top:492px;letter-spacing:0.384px;color:#000">10/7/1997</div>
<div class="t" style="left:113.28px;top:492px;letter-spacing:-0.108px;color:#000">17:00:00</div>
<div class="t" style="left:181.28px;top:492px;letter-spacing:-0.265px;color:#000">1122.25</div>
<div class="t" style="left:245.28px;top:492px;letter-spacing:-0.265px;color:#000">1134.25</div>
<div class="t" style="left:316.28px;top:492px;letter-spacing:-0.272px;color:#000">1119.5</div>
<div class="t" style="left:380.28px;top:492px;letter-spacing:-0.272px;color:#000">1131.5</div>
<div class="t" style="left:448.28px;top:492px;letter-spacing:-0.362px;color:#000">11618</div>
<div class="t" style="left:519.04px;top:492px;letter-spacing:-0.425px;color:#000">7345</div>
<div class="t" style="left:557.02px;top:492px;letter-spacing:-0.180px;color:#000">81.35538064</div>
<div class="t" style="left:656.28px;top:492px;letter-spacing:-0.212px;color:#000">1106.8</div>
<svg class="a" style="left:634px;top:491px" width="6" height="6"><path d="M0 0H6L0 6Z" fill="#1e8a3e"/></svg>
<div class="t" style="left:751.87px;top:492px;letter-spacing:0.000px;color:#000">0</div>
<div class="t" style="left:815.87px;top:492px;letter-spacing:0.000px;color:#000">0</div>
<div class="t" style="left:889.87px;top:492px;letter-spacing:0.000px;color:#000">0</div>
<div class="t" style="left:930.96px;top:492px;letter-spacing:0.022px;color:#000">-9.25</div>
<div class="t" style="left:965.96px;top:492px;letter-spacing:1.050px;color:#000">---</div>
<div class="t" style="left:38.28px;top:512px;letter-spacing:0.384px;color:#000">10/8/1997</div>
<div class="t" style="left:113.28px;top:512px;letter-spacing:-0.108px;color:#000">17:00:00</div>
<div class="t" style="left:188.28px;top:512px;letter-spacing:-0.272px;color:#000">1131.5</div>
<div class="t" style="left:245.28px;top:512px;letter-spacing:-0.265px;color:#000">1133.75</div>
<div class="t" style="left:309.28px;top:512px;letter-spacing:-0.265px;color:#000">1116.75</div>
<div class="t" style="left:391.28px;top:512px;letter-spacing:-0.353px;color:#000">1124</div>
<div class="t" style="left:448.28px;top:512px;letter-spacing:-0.328px;color:#000">16119</div>
<div class="t" style="left:519.04px;top:512px;letter-spacing:-0.425px;color:#000">7885</div>
<div class="t" style="left:556.95px;top:512px;letter-spacing:-0.180px;color:#000">42.64680796</div>
<div class="t" style="left:649.28px;top:512px;letter-spacing:-0.265px;color:#000">1109.65</div>
<svg class="a" style="left:634px;top:511px" width="6" height="6"><path d="M0 0H6L0 6Z" fill="#1e8a3e"/></svg>
<div class="t" style="left:751.87px;top:512px;letter-spacing:0.000px;color:#000">0</div>
<div class="t" style="left:815.87px;top:512px;letter-spacing:0.000px;color:#000">0</div>
<div class="t" style="left:889.87px;top:512px;letter-spacing:0.000px;color:#000">0</div>
<div class="t" style="left:930.96px;top:512px;letter-spacing:0.022px;color:#000">-1.25</div>
<div class="t" style="left:965.96px;top:512px;letter-spacing:1.050px;color:#000">---</div>
<div class="t" style="left:38.28px;top:532px;letter-spacing:0.384px;color:#000">10/9/1997</div>
<div class="t" style="left:113.28px;top:532px;letter-spacing:-0.108px;color:#000">17:00:00</div>
<div class="t" style="left:181.28px;top:532px;letter-spacing:-0.265px;color:#000">1122.25</div>
<div class="t" style="left:245.28px;top:532px;letter-spacing:-0.265px;color:#000">1125.25</div>
<div class="t" style="left:309.28px;top:532px;letter-spacing:-0.265px;color:#000">1111.25</div>
<div class="t" style="left:391.28px;top:532px;letter-spacing:-0.356px;color:#000">1120</div>
<div class="t" style="left:455.33px;top:532px;letter-spacing:-0.523px;color:#000">9275</div>
<div class="t" style="left:519.02px;top:532px;letter-spacing:-0.310px;color:#000">8003</div>
<div class="t" style="left:557.00px;top:532px;letter-spacing:-0.173px;color:#000">62.49955357</div>
<div class="t" style="left:642.28px;top:532px;letter-spacing:-0.260px;color:#000">1112.775</div>
<svg class="a" style="left:634px;top:531px" width="6" height="6"><path d="M0 0H6L0 6Z" fill="#1e8a3e"/></svg>
<div class="t" style="left:751.87px;top:532px;letter-spacing:0.000px;color:#000">0</div>
<div class="t" style="left:815.87px;top:532px;letter-spacing:0.000px;color:#000">0</div>
<div class="t" style="left:889.87px;top:532px;letter-spacing:0.000px;color:#000">0</div>
<div class="t" style="left:930.96px;top:532px;letter-spacing:0.022px;color:#000">-2.25</div>
<div class="t" style="left:965.96px;top:532px;letter-spacing:1.050px;color:#000">---</div>
<div class="t" style="left:31.28px;top:552px;letter-spacing:0.316px;color:#000">10/10/1997</div>
<div class="t" style="left:113.28px;top:552px;letter-spacing:-0.108px;color:#000">17:00:00</div>
<div class="t" style="left:199.28px;top:552px;letter-spacing:-0.407px;color:#000">1121</div>
<div class="t" style="left:263.28px;top:552px;letter-spacing:-0.395px;color:#000">1123</div>
<div class="t" style="left:327.28px;top:552px;letter-spacing:-0.378px;color:#000">1106</div>
<div class="t" style="left:373.28px;top:552px;letter-spacing:-0.265px;color:#000">1118.75</div>
<div class="t" style="left:455.00px;top:552px;letter-spacing:-0.285px;color:#000">6506</div>
<div class="t" style="left:519.02px;top:552px;letter-spacing:-0.322px;color:#000">8061</div>
<div class="t" style="left:557.04px;top:552px;letter-spacing:-0.193px;color:#000">74.99955883</div>
<div class="t" style="left:656.28px;top:552px;letter-spacing:-0.213px;color:#000">1115.1</div>
<svg class="a" style="left:634px;top:551px" width="6" height="6"><path d="M0 0H6L0 6Z" fill="#1e8a3e"/></svg>
<div class="t" style="left:751.87px;top:552px;letter-spacing:0.000px;color:#000">0</div>
<div class="t" style="left:815.87px;top:552px;letter-spacing:0.000px;color:#000">0</div>
<div class="t" style="left:889.87px;top:552px;letter-spacing:0.000px;color:#000">0</div>
<div class="t" style="left:937.96px;top:552px;letter-spacing:0.106px;color:#000">-0.5</div>
<div class="t" style="left:965.96px;top:552px;letter-spacing:1.050px;color:#000">---</div>
<div class="t" style="left:31.28px;top:572px;letter-spacing:0.316px;color:#000">10/13/1997</div>
<div class="t" style="left:113.28px;top:572px;letter-spacing:-0.108px;color:#000">17:00:00</div>
<div class="t" style="left:181.28px;top:572px;letter-spacing:-0.265px;color:#000">1118.75</div>
<div class="t" style="left:245.28px;top:572px;letter-spacing:-0.265px;color:#000">1122.75</div>
<div class="t" style="left:327.28px;top:572px;letter-spacing:-0.378px;color:#000">1116</div>
<div class="t" style="left:380.28px;top:572px;letter-spacing:-0.272px;color:#000">1118.5</div>
<div class="t" style="left:455.01px;top:572px;letter-spacing:-0.415px;color:#000">2895</div>
<div class="t" style="left:519.02px;top:572px;letter-spacing:-0.293px;color:#000">8576</div>
<div class="t" style="left:557.19px;top:572px;letter-spacing:-0.198px;color:#000">33.35764929</div>
<div class="t" style="left:649.28px;top:572px;letter-spacing:-0.265px;color:#000">1116.55</div>
<svg class="a" style="left:634px;top:571px" width="6" height="6"><path d="M0 0H6L0 6Z" fill="#1e8a3e"/></svg>
<div class="t" style="left:751.87px;top:572px;letter-spacing:0.000px;color:#000">0</div>
<div class="t" style="left:815.87px;top:572px;letter-spacing:0.000px;color:#000">0</div>
<div class="t" style="left:889.87px;top:572px;letter-spacing:0.000px;color:#000">0</div>
<div class="t" style="left:937.96px;top:572px;letter-spacing:0.106px;color:#000">-0.5</div>
<div class="t" style="left:965.96px;top:572px;letter-spacing:1.050px;color:#000">---</div>
<div class="a" style="left:26px;top:130px;width:2px;height:450px;background:repeating-linear-gradient(#217346 0 3px,#fff 3px 5px,#217346 5px 9px)"></div>
<div class="a" style="left:100px;top:130px;width:2px;height:450px;background:repeating-linear-gradient(#217346 0 5px,#fff 5px 7px,#217346 7px 9px)"></div>
<div class="a" style="left:26px;top:130px;width:76px;height:2px;background:repeating-linear-gradient(90deg,#217346 0 5px,#fff 5px 7px,#217346 7px 9px)"></div>
<div class="a" style="left:963px;top:130px;width:2px;height:450px;background:repeating-linear-gradient(#217346 0 3px,#fff 3px 5px,#217346 5px 9px)"></div>
<div class="a" style="left:1026px;top:130px;width:2px;height:450px;background:repeating-linear-gradient(#217346 0 4px,#fff 4px 6px,#217346 6px 9px)"></div>
<div class="a" style="left:963px;top:130px;width:65px;height:2px;background:repeating-linear-gradient(90deg,#217346 0 4px,#fff 4px 6px,#217346 6px 9px)"></div>
<div class="a" style="left:26px;top:129px;width:77px;height:2px;background:#217346"></div>
<div class="a" style="left:962px;top:129px;width:67px;height:2px;background:#217346"></div>
<div class="a" style="left:25px;top:131px;width:2px;height:449px;background:#217346"></div>
<div class="a" style="left:965px;top:132px;width:61px;height:17px;border:1px solid #217346;background:#fff"></div>
<div class="a" style="left:966px;top:149px;width:59px;height:1px;background:#fff"></div>
<div class="t" style="left:965.88px;top:132px;letter-spacing:0.127px;color:#000">Trades</div>
<svg class="a" style="left:0;top:0" width="1156" height="4"><path d="M63.6 0V1.5" stroke="#333" stroke-width="1.4"/><path d="M508 1.3H511.2Q512.3 1.1 512.6 0" stroke="#333" stroke-width="1.3" fill="none"/><path d="M1107.3 1.5Q1109 1.4 1109.6 0" stroke="#333" stroke-width="1.1" fill="none"/></svg>
</body></html>
